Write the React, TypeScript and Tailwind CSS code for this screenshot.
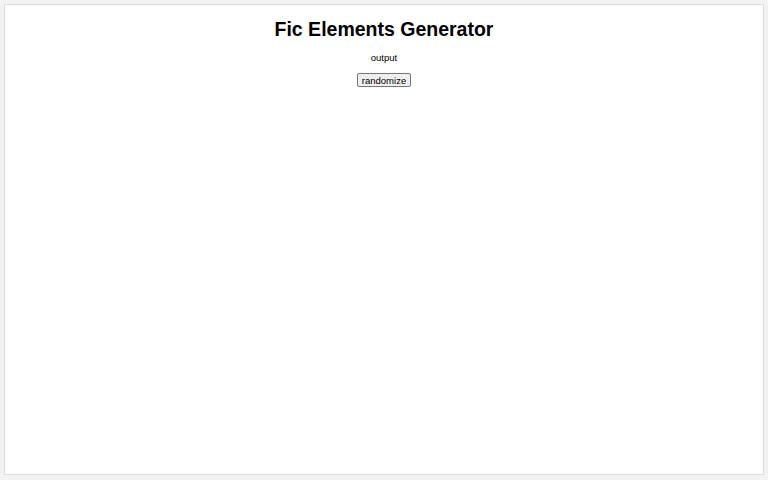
export default function App() {
  return (
    <div className="h-[480px] w-[768px] bg-[#f3f3f3] p-1 font-['Liberation_Sans',Arial,sans-serif] text-black">
      <div className="flex h-[471px] flex-col items-center border border-[#dcdcdc] bg-white">
        <h1 className="mt-[12px] text-[19.5px] font-bold leading-[24px]">Fic Elements Generator</h1>
        <p className="mt-[11px] text-[9.5px] leading-[12px]">output</p>
        <button className="mt-[9px] h-[14px] rounded-[2px] border border-[#767676] bg-[#efefef] px-[4px] text-[9.5px] leading-[11px]">
          randomize
        </button>
      </div>
    </div>
  );
}
